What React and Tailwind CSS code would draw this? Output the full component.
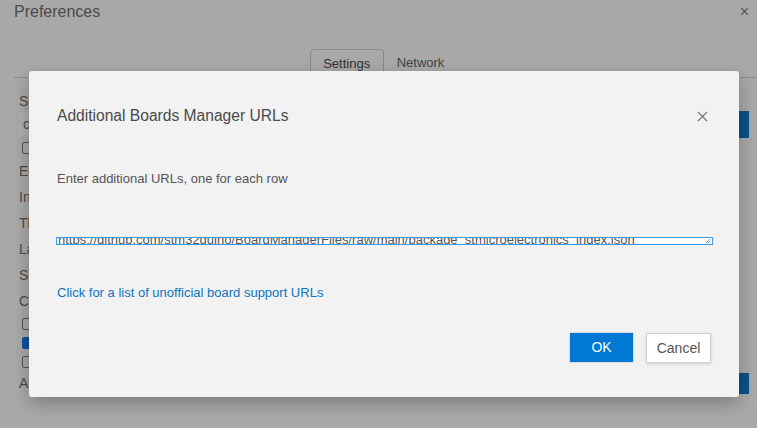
import React from 'react';

const url = 'https://github.com/stm32duino/BoardManagerFiles/raw/main/package_stmicroelectronics_index.json';

const Box = ({ checked }) => (
  <div className={`w-[12px] h-[12px] rounded-[2px] border ${checked ? 'bg-[#0b52a0] border-[#0b52a0]' : 'border-[#555]'}`} />
);

const Background = () => (
  <div className="flex flex-col h-full text-[#4a4a4a]">
    <div className="flex justify-between items-center h-[24px] pl-[14px] pr-[8px]">
      <span className="text-[16px]">Preferences</span>
      <span className="text-[16px] leading-none text-[#555]">×</span>
    </div>
    <div className="flex justify-center items-end gap-[13px] mt-[25px] h-[28px] pr-[3px]">
      <div className="h-[28px] w-[74px] border border-b-0 border-[#8a8a8a] rounded-t-[4px] flex items-center justify-center text-[13px] text-[#333]">Settings</div>
      <div className="h-[28px] flex items-center text-[13px] text-[#444]">Network</div>
    </div>
    <div className="ml-[14px] border-b border-[#8c8c8c]" />
    <div className="flex flex-col pl-[19px] pr-[8px] text-[14px]">
      <div className="h-[32px] flex items-center pt-[14px]">Sketchbook location:</div>
      <div className="h-[28px] flex items-center justify-between">
        <div className="h-[24px] w-[600px] bg-[#b0b0b0] flex items-center pl-[4px]">c:\Users\Documents\Arduino</div>
        <div className="h-[27px] w-[40px] bg-[#0a528a]" />
      </div>
      <div className="h-[20px] flex items-center pl-[3px] gap-[6px]"><Box /><span>Show files inside Sketches</span></div>
      <div className="h-[26px] flex items-center">Editor font size:</div>
      <div className="h-[26px] flex items-center">Interface scale:</div>
      <div className="h-[26px] flex items-center">Theme:</div>
      <div className="h-[26px] flex items-center">Language:</div>
      <div className="h-[26px] flex items-center">Show verbose output during</div>
      <div className="h-[26px] flex items-center">Compiler warnings</div>
      <div className="h-[19px] flex items-center pl-[3px] gap-[6px]"><Box /><span>Verify code after upload</span></div>
      <div className="h-[19px] flex items-center pl-[3px] gap-[6px]"><Box checked /><span>Auto save</span></div>
      <div className="h-[19px] flex items-center pl-[3px] gap-[6px]"><Box /><span>Editor Quick Suggestions</span></div>
      <div className="h-[24px] flex items-center justify-between">
        <span>Additional boards manager URLs:</span>
        <div className="h-[21px] w-[30px] bg-[#0a528a]" />
      </div>
    </div>
  </div>
);

export default function App() {
  return (
    <div className="relative w-[757px] h-[428px] overflow-hidden bg-[#a9a9a9] font-['Liberation_Sans',Arial,sans-serif]">
      <Background />

      <div className="absolute left-[29px] top-[71px] w-[710px] h-[326px] bg-[#f2f2f2] rounded-[3px] shadow-[0_6px_18px_rgba(0,0,0,0.28)] flex flex-col px-[28px]">
        <div className="flex justify-between items-center mt-[35px] h-[20px]">
          <span className="text-[15.6px] text-[#4a4a4a]">Additional Boards Manager URLs</span>
          <svg width="11" height="11" viewBox="0 0 11 11" className="mr-[3px]">
            <path d="M1 1L10 10M10 1L1 10" stroke="#777" strokeWidth="1.2" />
          </svg>
        </div>
        <div className="mt-[46px] text-[13px] text-[#555] leading-[14px]">Enter additional URLs, one for each row</div>
        <div className="relative mt-[51px] -ml-[1px] w-[657px] h-[8px] border border-[#3a9cf0] bg-white overflow-hidden">
          <div className="text-[13px] leading-[12px] -mt-[4px] pl-[1px] text-[#555] whitespace-nowrap">{url}</div>
          <svg width="6" height="6" viewBox="0 0 6 6" className="absolute right-[1px] top-0">
            <path d="M1 5L5 1M3 5L5 3" stroke="#777" strokeWidth="0.8" />
          </svg>
        </div>
        <div className="mt-[41px] text-[13px] leading-[14px] text-[#0f74c0]">Click for a list of unofficial board support URLs</div>
        <div className="flex justify-end gap-[13px] mt-[33px]">
          <div className="w-[63px] h-[29px] bg-[#0078d4] text-white text-[14px] flex items-center justify-center shadow-[0_0_2px_rgba(0,0,0,0.25)]">OK</div>
          <div className="w-[65px] h-[30px] bg-white border border-[#d0d0d0] text-[#555] text-[14px] flex items-center justify-center shadow-[0_1px_3px_rgba(0,0,0,0.15)]">Cancel</div>
        </div>
      </div>
    </div>
  );
}
